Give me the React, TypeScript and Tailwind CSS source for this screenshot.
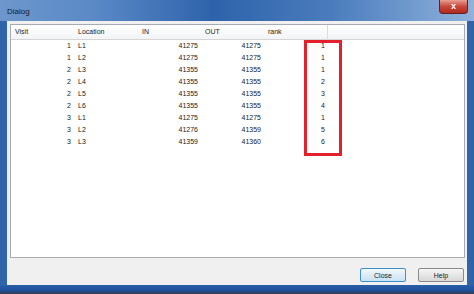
import React from "react";

const rows = [
  { visit: 1, loc: "L1", inn: 41275, out: 41275, rank: 1 },
  { visit: 1, loc: "L2", inn: 41275, out: 41275, rank: 1 },
  { visit: 2, loc: "L3", inn: 41355, out: 41355, rank: 1 },
  { visit: 2, loc: "L4", inn: 41355, out: 41355, rank: 2 },
  { visit: 2, loc: "L5", inn: 41355, out: 41355, rank: 3 },
  { visit: 2, loc: "L6", inn: 41355, out: 41355, rank: 4 },
  { visit: 3, loc: "L1", inn: 41275, out: 41275, rank: 1 },
  { visit: 3, loc: "L2", inn: 41276, out: 41359, rank: 5 },
  { visit: 3, loc: "L3", inn: 41359, out: 41360, rank: 6 },
];

const cols = ["w-[63px]", "w-[64px]", "w-[63px]", "w-[63px]", "w-[64px]"];

export default function App() {
  return (
    <div className="w-[474px] h-[294px] flex flex-col overflow-hidden font-['Liberation_Sans',Arial,sans-serif] text-[7px] text-[#222] bg-[linear-gradient(90deg,#2f64aa,#4f82c2_30%,#3a6db2_60%,#5487c6_85%,#2e62a6)]">
      {/* title bar */}
      <div className="h-[21px] flex items-start justify-between pl-[7px] pr-[6px] bg-[linear-gradient(90deg,#6d97cc,#5a89c6_20%,#2e63ab_45%,#4a7cbd_70%,#8fb2dc)]">
        <span className="mt-[6px] text-[8px] text-[#1a1a1a]">Dialog</span>
        <div className="w-[29px] h-[14px] rounded-b-[4px] border border-[#6b2020] border-t-0 bg-[linear-gradient(180deg,#e8a093,#c9473a_50%,#b02a1e)] flex items-center justify-center text-white text-[9px] font-bold leading-none">
          x
        </div>
      </div>

      {/* client area */}
      <div className="flex-1 flex px-[7px]">
        <div className="flex-1 flex flex-col bg-[#f0f0f0] pt-[3px] pl-[3px] pr-[2px]">
          <div className="relative h-[234px] border border-[#a5acb5] bg-white">
            {/* header */}
            <div className="flex h-[15px] border-b border-[#d5d5d5] bg-[linear-gradient(180deg,#ffffff,#f3f4f6)]">
              {["Visit", "Location", "IN", "OUT", "rank"].map((h, i) => (
                <div
                  key={h}
                  className={`${cols[i]} flex items-center pl-[4px] ${i === 4 ? "border-r border-[#dcdcdc]" : ""}`}
                >
                  {h}
                </div>
              ))}
            </div>
            {/* rows */}
            <div className="flex flex-col">
              {rows.map((r, i) => (
                <div key={i} className="flex h-[12px] items-center">
                  <div className={`${cols[0]} text-right pr-[3px]`}>{r.visit}</div>
                  <div className={`${cols[1]} pl-[4px]`}>{r.loc}</div>
                  <div className={`${cols[2]} text-right pr-[3px]`}>{r.inn}</div>
                  <div className={`${cols[3]} text-right pr-[3px]`}>{r.out}</div>
                  <div className={`${cols[4]} text-right pr-[3px]`}>{r.rank}</div>
                </div>
              ))}
            </div>
            {/* red highlight box */}
            <div className="absolute left-[293px] top-[15px] w-[38px] h-[116px] border-[3px] border-[#e3202b]" />
          </div>

          {/* buttons */}
          <div className="flex justify-end gap-[12px] mt-[10px] pr-[1px]">
            <button className="w-[46px] h-[14px] rounded-[2px] border border-[#3c8fc7] bg-[linear-gradient(180deg,#f2f9fd,#dcecf8_50%,#c9e2f4)] text-[7px] text-[#222] leading-none">
              Close
            </button>
            <button className="w-[46px] h-[14px] rounded-[2px] border border-[#8a8a8a] bg-[linear-gradient(180deg,#f5f5f5,#e6e6e6_50%,#d8d8d8)] text-[7px] text-[#222] leading-none">
              Help
            </button>
          </div>
        </div>
      </div>

      {/* bottom frame */}
      <div className="h-[9px] bg-[linear-gradient(180deg,#2c5fa8,#1d4f9c_60%,#3a3f4a)]" />
    </div>
  );
}
